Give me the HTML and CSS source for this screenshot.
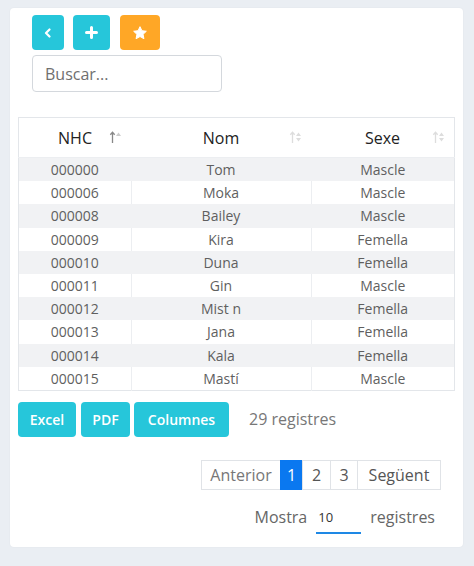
FILE: index.html
```html
<!DOCTYPE html>
<html lang="ca">
<head>
  <meta charset="UTF-8" />
  <meta name="viewport" content="width=device-width, initial-scale=1.0"/>
  <title>Pacients</title>
  <link rel="stylesheet" href="styles.css">
</head>
<body>
  <div class="card">
    <div class="toolbar">
      <div class="actions">
        <button class="btn btn-info btn-back">
          <svg width="10" height="10" viewBox="0 0 10 10"><path d="M6.5 1.5 L3 5 L6.5 8.5" fill="none" stroke="#fff" stroke-width="2.2" stroke-linecap="round" stroke-linejoin="round"/></svg>
        </button>
        <button class="btn btn-info btn-add">
          <svg width="13" height="13" viewBox="0 0 13 13"><path d="M6.5 1.5 V11.5 M1.5 6.5 H11.5" stroke="#fff" stroke-width="3" stroke-linecap="round"/></svg>
        </button>
        <button class="btn btn-warning btn-fav">
          <svg width="16" height="16" viewBox="0 0 24 24"><path d="M12 2.5l2.9 6.1 6.6.8-4.9 4.6 1.3 6.6L12 17.3l-5.9 3.3 1.3-6.6L2.5 9.4l6.6-.8z" fill="#fff" stroke="#fff" stroke-width="1.5" stroke-linejoin="round"/></svg>
        </button>
      </div>
      <input class="search" type="text" placeholder="Buscar...">
    </div>

    <table class="grid">
      <thead>
        <tr>
          <th class="col-nhc">NHC <span class="sort active"><svg width="14" height="14" viewBox="0 0 14 14"><path d="M3.5 13 V2.5 M1.3 4.7 L3.5 2.3 L5.7 4.7" fill="none" stroke="#888" stroke-width="1.3"/><path d="M7 6 L9.5 2.5 L12 6 Z" fill="#ccc"/></svg></span></th>
          <th class="col-nom">Nom <span class="sort"><svg width="14" height="14" viewBox="0 0 14 14"><path d="M3.5 13 V2.5 M1.3 4.7 L3.5 2.3 L5.7 4.7" fill="none" stroke="#ddd" stroke-width="1.3"/><path d="M7 6 L9.5 2.5 L12 6 Z M7 8 L9.5 11.5 L12 8 Z" fill="#ddd"/></svg></span></th>
          <th class="col-sexe">Sexe <span class="sort"><svg width="14" height="14" viewBox="0 0 14 14"><path d="M3.5 13 V2.5 M1.3 4.7 L3.5 2.3 L5.7 4.7" fill="none" stroke="#ddd" stroke-width="1.3"/><path d="M7 6 L9.5 2.5 L12 6 Z M7 8 L9.5 11.5 L12 8 Z" fill="#ddd"/></svg></span></th>
        </tr>
      </thead>
      <tbody>
        <tr><td>000000</td><td>Tom</td><td>Mascle</td></tr>
        <tr><td>000006</td><td>Moka</td><td>Mascle</td></tr>
        <tr><td>000008</td><td>Bailey</td><td>Mascle</td></tr>
        <tr><td>000009</td><td>Kira</td><td>Femella</td></tr>
        <tr><td>000010</td><td>Duna</td><td>Femella</td></tr>
        <tr><td>000011</td><td>Gin</td><td>Mascle</td></tr>
        <tr><td>000012</td><td>Mist n</td><td>Femella</td></tr>
        <tr><td>000013</td><td>Jana</td><td>Femella</td></tr>
        <tr><td>000014</td><td>Kala</td><td>Femella</td></tr>
        <tr><td>000015</td><td>Mastí</td><td>Mascle</td></tr>
      </tbody>
    </table>

    <div class="export">
      <button class="btn btn-info btn-excel">Excel</button>
      <button class="btn btn-info btn-pdf">PDF</button>
      <button class="btn btn-info btn-cols">Columnes</button>
      <span class="count">29 registres</span>
    </div>

    <div class="pager">
      <span class="page disabled prev">Anterior</span>
      <span class="page current">1</span>
      <span class="page p2">2</span>
      <span class="page p3">3</span>
      <span class="page next">Següent</span>
    </div>

    <div class="length">
      <span>Mostra</span>
      <span class="length-input">10</span>
      <span>registres</span>
    </div>
  </div>
</body>
</html>
```

FILE: styles.css
```css
body {
  margin: 0;
  padding: 8px 11px 19px 10px;
  background: #eaeef3;
  font-family: "Open Sans", "Noto Sans", sans-serif;
  color: #333;
}

.card {
  background: #fff;
  border-radius: 4px;
  padding: 7px 8px 0 8px;
  height: 539px;
  box-sizing: border-box;
  box-shadow: 0 0 2px rgba(0,0,0,0.06);
}

.toolbar {
  padding-left: 14px;
}

.actions {
  display: flex;
  gap: 9px;
}

.btn {
  border: none;
  border-radius: 4px;
  height: 35px;
  padding: 0;
  color: #fff;
  font-family: inherit;
  font-size: 14px;
  font-weight: 600;
  cursor: pointer;
  display: flex;
  align-items: center;
  justify-content: center;
}

.btn-info {
  background: #26c6da;
}

.btn-warning {
  background: #ffa726;
}

.btn-back { width: 32px; }
.btn-add { width: 37px; }
.btn-fav { width: 40px; margin-left: 1px; }

.search {
  display: block;
  margin-top: 5px;
  width: 190px;
  height: 37px;
  box-sizing: border-box;
  border: 1px solid #d4d8dd;
  border-radius: 4px;
  padding: 0 12px;
  font-family: inherit;
  font-size: 16px;
  color: #333;
}

.search::placeholder {
  color: #6f6f6f;
}

.grid {
  margin-top: 25px;
  width: 437px;
  border-collapse: collapse;
  border: 1px solid #e3e6ea;
  table-layout: fixed;
}

.grid th {
  height: 39px;
  font-size: 16px;
  font-weight: 500;
  color: #222;
  position: relative;
  border-bottom: 1px solid #eceef1;
  padding: 0;
}

.col-nhc { width: 112px; }
.col-nom { width: 180px; }

.sort {
  position: absolute;
  right: 8px;
  top: 12px;
  line-height: 0;
}

.grid td {
  height: 23.2px;
  padding: 0;
  text-align: center;
  font-size: 14px;
  color: #5f5f5f;
  border-left: 1px solid #eceef1;
}

.grid td:first-child {
  border-left: none;
}

.grid tbody tr:nth-child(odd) td {
  background: #f1f2f4;
  border-left-color: #f1f2f4;
}

.export {
  display: flex;
  align-items: center;
  margin-top: 11px;
}

.export .btn {
  font-size: 14px;
}

.btn-excel { width: 58px; }
.btn-pdf { width: 49px; margin-left: 5px; }
.btn-cols { width: 95px; margin-left: 4px; }

.count {
  margin-left: 20px;
  font-size: 16px;
  color: #777;
}

.pager {
  display: flex;
  justify-content: flex-end;
  margin-top: 23px;
  margin-right: 14px;
}

.page {
  height: 30px;
  box-sizing: border-box;
  border: 1px solid #e0e3e7;
  margin-left: -1px;
  padding: 0;
  display: flex;
  align-items: center;
  justify-content: center;
  font-size: 16px;
  color: #555;
}

.page.prev {
  width: 80px;
  color: #777;
}

.page.current {
  background: #0a78f0;
  border-color: #0a78f0;
  color: #fff;
  width: 23px;
}

.page.p2 { width: 29px; }
.page.p3 { width: 28px; }

.page.next {
  width: 84px;
}

.length {
  display: flex;
  justify-content: flex-end;
  align-items: center;
  margin-top: 14px;
  margin-right: 20px;
  font-size: 16px;
  color: #666;
}

.length-input {
  width: 45px;
  margin: 0 9px 0 9px;
  padding: 0 0 6px 2px;
  box-sizing: border-box;
  border-bottom: 2px solid #1e88e5;
  font-size: 13px;
  color: #333;
  position: relative;
  top: 4px;
}
```
